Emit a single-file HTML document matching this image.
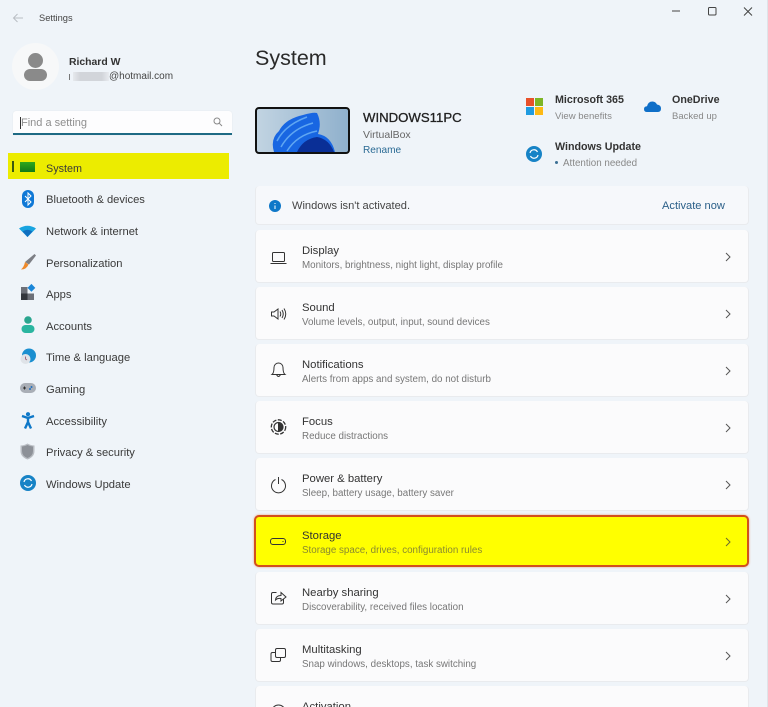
<!DOCTYPE html>
<html><head><meta charset="utf-8"><style>
html,body{margin:0;padding:0;width:768px;height:707px;overflow:hidden}
#w{position:absolute;left:0;top:0;width:768px;height:707px;overflow:hidden;background:#eff4f9;font-family:"Liberation Sans",sans-serif;color:#2b2b2b;font-size:11px;filter:blur(.3px)}
.t{position:absolute;white-space:nowrap;line-height:14px}
svg{position:absolute;overflow:visible}
.nav{left:46px;font-size:11.2px;color:#3a3a3a}
.s{font-size:10.7px;font-weight:bold;color:#333}
.card{position:absolute;left:255px;width:492px;height:52px;background:#fbfbfc;border:1px solid #e9ebee;border-width:0 1px 1px;border-radius:4px}
.card .a{position:absolute;left:47px;top:14px;font-size:11.3px;color:#333;line-height:14px;white-space:nowrap;margin-left:-1px}
.card .b{position:absolute;left:47px;top:29px;font-size:9.8px;color:#777;line-height:13px;white-space:nowrap;margin-left:-1px}
.card svg.c{left:469px;top:22px}
.card svg.i{left:14px;top:17px}
</style></head><body><div id="w">
<div style="position:absolute;right:0;top:0;width:1px;height:707px;background:#dfe3e8"></div>
<svg style="left:12px;top:12px" width="12" height="12" viewBox="0 0 12 12" fill="none" stroke="#b9bec4" stroke-width="1"><path d="M1.500 6H11M5.500 2L1.500 6L5.500 10"/></svg>
<div class="t" style="left:39px;top:11px;font-size:9.300px;color:#444">Settings</div>
<svg style="left:672px;top:6px" width="80" height="12" viewBox="0 0 80 12" fill="none" stroke="#444" stroke-width="1"><path d="M0 5H8"/><rect x="36.500" y="1.500" width="7.500" height="7.500" rx="1"/><path d="M72 1.500L80 9.500M80 1.500L72 9.500"/></svg>

<div style="position:absolute;left:12px;top:43px;width:47px;height:47px;border-radius:50%;background:#f7f8f9"></div>
<div style="position:absolute;left:28px;top:53px;width:15px;height:15px;border-radius:50%;background:#8a8a8a"></div>
<div style="position:absolute;left:24px;top:69px;width:23px;height:12px;border-radius:6px;background:#8a8a8a"></div>
<div class="t" style="left:69px;top:56px;font-size:10.400px;font-weight:bold;color:#333">Richard W</div>
<div style="position:absolute;left:69px;top:74px;width:1px;height:6px;background:#777"></div>
<div style="position:absolute;left:73px;top:72px;width:36px;height:9px;background:linear-gradient(90deg,#e6e9ed,#d2d5da 20%,#d2d5da 80%,#e8ebef)"></div>
<div class="t" style="left:109px;top:70px;font-size:10px;color:#444">@hotmail.com</div>

<div style="position:absolute;left:13px;top:111px;width:219px;height:22px;background:#fdfdfe;border-bottom:2px solid #1e6a84;border-radius:3px 3px 0 0;box-shadow:0 0 1px #d8dce0"></div>
<div style="position:absolute;left:20px;top:117px;width:1px;height:12px;background:#333"></div>
<div class="t" style="left:21px;top:116px;font-size:11px;color:#8f8f8f">Find a setting</div>
<svg style="left:213px;top:117px" width="10" height="10" viewBox="0 0 10 10" fill="none" stroke="#888" stroke-width="1"><circle cx="4" cy="4" r="3"/><path d="M6.200 6.200L9 9"/></svg>

<div style="position:absolute;left:8px;top:153px;width:221px;height:26px;background:#ecec00"></div>
<div style="position:absolute;left:12px;top:161px;width:2px;height:11px;background:#3a5a10"></div>
<div style="position:absolute;left:20px;top:162px;width:15px;height:10px;background:linear-gradient(#2ea81c,#127a18)"></div>
<div class="t nav" style="top:162px;font-size:10.800px">System</div>
<div class="t nav" style="top:193px">Bluetooth &amp; devices</div>
<div class="t nav" style="top:225px">Network &amp; internet</div>
<div class="t nav" style="top:257px">Personalization</div>
<div class="t nav" style="top:288px">Apps</div>
<div class="t nav" style="top:320px">Accounts</div>
<div class="t nav" style="top:351px">Time &amp; language</div>
<div class="t nav" style="top:383px">Gaming</div>
<div class="t nav" style="top:415px">Accessibility</div>
<div class="t nav" style="top:446px">Privacy &amp; security</div>
<div class="t nav" style="top:478px">Windows Update</div>

<svg style="left:21px;top:190px" width="14" height="18" viewBox="0 0 14 18"><rect x="1" y="0" width="12" height="18" rx="6" fill="#0f78d6"/><path d="M4 6L10 12L7 15V3L10 6L4 12" fill="none" stroke="#fff" stroke-width="1"/></svg>
<svg style="left:19px;top:225px" width="17" height="12" viewBox="0 0 17 12"><path d="M0 3.500Q8.500 -2 17 3.500L8.500 12Z" fill="#19a4e0"/><path d="M3.500 6.500Q8.500 3 13.500 6.500L8.500 12Z" fill="#0f6fc0"/></svg>
<svg style="left:20px;top:253px" width="17" height="17" viewBox="0 0 17 17"><path d="M14.500 1L16 2.500L9 11.500L5 9Z" fill="#7d7f85"/><path d="M5 9L8.500 11.500Q6.500 16.500 1 16.500Q4 14 5 9Z" fill="#ee8a2c"/></svg>
<svg style="left:20px;top:285px" width="15" height="15" viewBox="0 0 15 15"><rect x="1" y="2" width="6.500" height="6.500" fill="#6d7078"/><rect x="1" y="8.500" width="6.500" height="6.500" fill="#33363c"/><rect x="7.500" y="8.500" width="6.500" height="6.500" fill="#6d7078"/><rect x="8.500" y="0" width="5.500" height="5.500" transform="rotate(45 11.250 3)" fill="#1a86d8"/></svg>
<svg style="left:21px;top:316px" width="14" height="17" viewBox="0 0 14 17"><circle cx="7" cy="4" r="3.800" fill="#2aa58f"/><rect x="0.500" y="9" width="13" height="8" rx="4" fill="#2ab5a0"/></svg>
<svg style="left:20px;top:348px" width="17" height="17" viewBox="0 0 17 17"><circle cx="9" cy="7.500" r="7" fill="#1b8fd0"/><circle cx="5.500" cy="11" r="5" fill="#dfe3e8"/><path d="M5.500 8.500V11L7 12" stroke="#a06a80" stroke-width="1" fill="none"/></svg>
<svg style="left:20px;top:382px" width="16" height="12" viewBox="0 0 16 12"><rect x="0" y="1" width="16" height="10" rx="5" fill="#a9aeb6"/><path d="M3 6H6M4.500 4.500V7.500" stroke="#333" stroke-width="1"/><circle cx="11.500" cy="5" r="1" fill="#1f6fc0"/><circle cx="10" cy="7" r="1" fill="#1f6fc0"/></svg>
<svg style="left:21px;top:412px" width="14" height="17" viewBox="0 0 14 17"><circle cx="7" cy="2.200" r="2.100" fill="#0f78c8"/><path d="M1 4L7 6L13 4M7 6V10M7 10L4 16.500M7 10L10 16.500" fill="none" stroke="#0f78c8" stroke-width="2.400"/></svg>
<svg style="left:20px;top:443px" width="15" height="17" viewBox="0 0 15 17"><path d="M7.500 0.500Q11 2.500 14.500 2.500V8Q14.500 14 7.500 16.500Q0.500 14 0.500 8V2.500Q4 2.500 7.500 0.500Z" fill="#b9bdc3"/><path d="M7.500 2Q10.500 3.500 13 3.500V8Q13 13 7.500 15Q2 13 2 8V3.500Q4.500 3.500 7.500 2Z" fill="#8d9198"/></svg>
<svg style="left:20px;top:475px" width="16" height="16" viewBox="0 0 16 16"><circle cx="8" cy="8" r="8" fill="#1783c6"/><path d="M4 7A4 4 0 0 1 11.500 6M12 9A4 4 0 0 1 4.500 10" fill="none" stroke="#fff" stroke-width="1.200"/></svg>

<div class="t" style="left:255px;top:45px;font-size:21.500px;line-height:26px;color:#2a2a2a">System</div>

<svg style="left:255px;top:107px" width="95" height="47" viewBox="0 0 95 47">
<defs><linearGradient id="g" x1="0" x2="1" y1="0" y2="0"><stop offset="0" stop-color="#c2d4e2"/><stop offset="1" stop-color="#8fb0cc"/></linearGradient></defs>
<rect x="1" y="1" width="93" height="45" rx="3" fill="url(#g)" stroke="#111" stroke-width="2"/>
<path d="M19 45Q15 32 24 24Q30 12 48 8Q58 5 62 6Q67 16 63 27Q76 29 80 45Z" fill="#1866e2"/>
<path d="M22 34Q30 18 52 10M26 40Q36 22 58 16M32 44Q42 28 62 24" stroke="#5fa6f2" stroke-width="1.500" fill="none"/>
<path d="M42 45Q48 32 62 30Q74 32 79 45Z" fill="#0a2f96"/>
</svg>
<div class="t" style="left:363px;top:109px;font-size:13.200px;line-height:17px;color:#222;-webkit-text-stroke:.3px #222">WINDOWS11PC</div>
<div class="t" style="left:363px;top:128px;font-size:10.500px;color:#666">VirtualBox</div>
<div class="t" style="left:363px;top:144px;font-size:10.100px;color:#2a6a94">Rename</div>

<svg style="left:526px;top:98px" width="17" height="17" viewBox="0 0 17 17"><rect width="8" height="8" fill="#e8512a"/><rect x="9" width="8" height="8" fill="#7db525"/><rect y="9" width="8" height="8" fill="#1f9be0"/><rect x="9" y="9" width="8" height="8" fill="#fdb914"/></svg>
<div class="t s" style="left:555px;top:93px">Microsoft 365</div>
<div class="t" style="left:555px;top:110px;font-size:9.600px;color:#888">View benefits</div>
<svg style="left:644px;top:100px" width="17" height="12" viewBox="0 0 17 12"><path d="M3 12Q0 12 0 9Q0 6.500 3 6.300Q4 1.500 8.500 1.500Q11.500 1.500 13 4.500Q17 5 17 8.500Q17 12 14 12Z" fill="#0f6fc8"/></svg>
<div class="t s" style="left:672px;top:93px">OneDrive</div>
<div class="t" style="left:672px;top:110px;font-size:9.500px;color:#888">Backed up</div>
<svg style="left:526px;top:146px" width="16" height="16" viewBox="0 0 16 16"><circle cx="8" cy="8" r="8" fill="#1783c6"/><path d="M4 7A4 4 0 0 1 11.500 6M12 9A4 4 0 0 1 4.500 10" fill="none" stroke="#fff" stroke-width="1.200"/></svg>
<div class="t s" style="left:555px;top:140px">Windows Update</div>
<div style="position:absolute;left:555px;top:161px;width:3px;height:3px;border-radius:50%;background:#3a6f94"></div>
<div class="t" style="left:563px;top:157px;font-size:9.800px;color:#888">Attention needed</div>

<div class="card" style="top:186px;height:38px;background:#f6f8fb"></div>
<svg style="left:269px;top:200px" width="12" height="12" viewBox="0 0 12 12"><circle cx="6" cy="6" r="6" fill="#0f78c8"/><path d="M6 5.500V9M6 3V4" stroke="#fff" stroke-width="1"/></svg>
<div class="t" style="left:292px;top:199px;font-size:11.100px;color:#444">Windows isn't activated.</div>
<div class="t" style="left:662px;top:199px;font-size:11.100px;color:#2a5f88">Activate now</div>

<div class="card" style="top:230px"><svg class="i" style="top:19px" width="18" height="18" viewBox="0 0 18 18" fill="none" stroke="#333"><rect x="2.500" y="3.500" width="12" height="9" rx="1"/><path d="M0.500 14.500H16.500"/></svg><div class="a">Display</div><div class="b">Monitors, brightness, night light, display profile</div><svg class="c" width="6" height="10" viewBox="0 0 6 10" fill="none" stroke="#555"><path d="M1 1L5 5L1 9"/></svg></div>
<div class="card" style="top:287px"><svg class="i" style="top:18px" width="18" height="18" viewBox="0 0 18 18" fill="none" stroke="#333"><path d="M1.500 7V11H4L8 14V4L4 7Z"/><path d="M10 6.500Q11.500 9 10 11.500M12 5Q14.500 9 12 13M14 3.500Q17.500 9 14 14.500"/></svg><div class="a">Sound</div><div class="b">Volume levels, output, input, sound devices</div><svg class="c" width="6" height="10" viewBox="0 0 6 10" fill="none" stroke="#555"><path d="M1 1L5 5L1 9"/></svg></div>
<div class="card" style="top:344px"><svg class="i" width="18" height="18" viewBox="0 0 18 18" fill="none" stroke="#333"><path d="M2 13.500Q4 12 4 6.500A4.500 4.500 0 0 1 13 6.500Q13 12 15 13.500Z"/><path d="M6.500 13.500Q8.500 17.500 10.500 13.500"/></svg><div class="a">Notifications</div><div class="b">Alerts from apps and system, do not disturb</div><svg class="c" width="6" height="10" viewBox="0 0 6 10" fill="none" stroke="#555"><path d="M1 1L5 5L1 9"/></svg></div>
<div class="card" style="top:401px"><svg class="i" width="18" height="18" viewBox="0 0 18 18" fill="none" stroke="#333"><circle cx="8.500" cy="9" r="7.200" stroke-width="1.300" stroke-dasharray="4 1.500"/><circle cx="8.500" cy="9" r="4.500" stroke-width="1.200"/><path d="M8.500 5A4 4 0 0 1 8.500 13Z" fill="#333"/></svg><div class="a">Focus</div><div class="b">Reduce distractions</div><svg class="c" width="6" height="10" viewBox="0 0 6 10" fill="none" stroke="#555"><path d="M1 1L5 5L1 9"/></svg></div>
<div class="card" style="top:458px"><svg class="i" style="top:18px" width="18" height="18" viewBox="0 0 18 18" fill="none" stroke="#333"><path d="M5.500 3.500A7 7 0 1 0 11.500 3.500M8.500 1V8"/></svg><div class="a">Power &amp; battery</div><div class="b">Sleep, battery usage, battery saver</div><svg class="c" width="6" height="10" viewBox="0 0 6 10" fill="none" stroke="#555"><path d="M1 1L5 5L1 9"/></svg></div>
<div class="card" style="top:515px;left:254px;width:491px;height:48px;background:#ffff00;border:2px solid #d2501c;border-radius:5px;box-shadow:0 0 2px #e8a080"><svg class="i" style="top:16px" width="18" height="18" viewBox="0 0 18 18" fill="none" stroke="#333"><rect x="0.500" y="5.500" width="15" height="6" rx="2.500"/><path d="M12.500 8.500H13.500"/></svg><div class="a" style="top:12px">Storage</div><div class="b" style="top:27px;color:#8a8a30">Storage space, drives, configuration rules</div><svg class="c" style="top:20px" width="6" height="10" viewBox="0 0 6 10" fill="none" stroke="#6a6a30"><path d="M1 1L5 5L1 9"/></svg></div>
<div class="card" style="top:572px"><svg class="i" width="18" height="18" viewBox="0 0 18 18" fill="none" stroke="#333"><path d="M6.500 3.500H3Q1.500 3.500 1.500 5V13.500Q1.500 15 3 15H12Q13.500 15 13.500 13.500V10"/><path d="M5.500 11Q6 6.500 11 6.500V3.500L16 8L11 12V9.500Q7.500 9 5.500 11Z"/></svg><div class="a">Nearby sharing</div><div class="b">Discoverability, received files location</div><svg class="c" width="6" height="10" viewBox="0 0 6 10" fill="none" stroke="#555"><path d="M1 1L5 5L1 9"/></svg></div>
<div class="card" style="top:629px"><svg class="i" width="18" height="18" viewBox="0 0 18 18" fill="none" stroke="#333"><rect x="5.500" y="2.500" width="10" height="9" rx="1.500"/><path d="M5.500 6.500H2.500Q1 6.500 1 8V14Q1 15.500 2.500 15.500H9Q10.500 15.500 10.500 14V11.500"/></svg><div class="a">Multitasking</div><div class="b">Snap windows, desktops, task switching</div><svg class="c" width="6" height="10" viewBox="0 0 6 10" fill="none" stroke="#555"><path d="M1 1L5 5L1 9"/></svg></div>
<div class="card" style="top:686px"><svg class="i" width="18" height="18" viewBox="0 0 18 18" fill="none" stroke="#333"><circle cx="8.500" cy="9" r="7"/></svg><div class="a">Activation</div></div>
</div></body></html>
